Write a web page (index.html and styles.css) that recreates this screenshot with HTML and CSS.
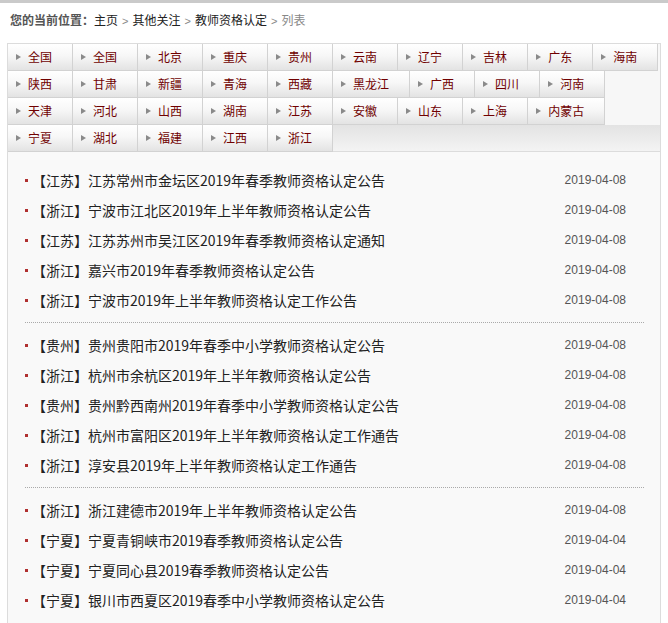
FILE: index.html
```html
<!DOCTYPE html>
<html lang="zh-CN">
<head>
<meta charset="utf-8">
<title>列表</title>
<link rel="stylesheet" href="styles.css">
</head>
<body>
<div class="topbar"></div>
<div class="crumb">
  <b class="crumb-label">您的当前位置：</b><a class="crumb-link">主页</a><span class="sep">&gt;</span><a class="crumb-link">其他关注</a><span class="sep">&gt;</span><a class="crumb-link">教师资格认定</a><span class="sep">&gt;</span><span class="crumb-cur">列表</span>
</div>

<div class="regions">
  <a class="tab">全国</a><a class="tab">全国</a><a class="tab">北京</a><a class="tab">重庆</a><a class="tab">贵州</a><a class="tab">云南</a><a class="tab">辽宁</a><a class="tab">吉林</a><a class="tab">广东</a><a class="tab">海南</a><a class="tab">陕西</a><a class="tab">甘肃</a><a class="tab">新疆</a><a class="tab">青海</a><a class="tab">西藏</a><a class="tab">黑龙江</a><a class="tab">广西</a><a class="tab">四川</a><a class="tab">河南</a><a class="tab">天津</a><a class="tab">河北</a><a class="tab">山西</a><a class="tab">湖南</a><a class="tab">江苏</a><a class="tab">安徽</a><a class="tab">山东</a><a class="tab">上海</a><a class="tab">内蒙古</a><a class="tab">宁夏</a><a class="tab">湖北</a><a class="tab">福建</a><a class="tab">江西</a><a class="tab">浙江</a>
</div>

<div class="list">
  <ul class="group">
    <li class="item"><a class="title">【江苏】江苏常州市金坛区2019年春季教师资格认定公告</a><span class="date">2019-04-08</span></li>
    <li class="item"><a class="title">【浙江】宁波市江北区2019年上半年教师资格认定公告</a><span class="date">2019-04-08</span></li>
    <li class="item"><a class="title">【江苏】江苏苏州市吴江区2019年春季教师资格认定通知</a><span class="date">2019-04-08</span></li>
    <li class="item"><a class="title">【浙江】嘉兴市2019年春季教师资格认定公告</a><span class="date">2019-04-08</span></li>
    <li class="item"><a class="title">【浙江】宁波市2019年上半年教师资格认定工作公告</a><span class="date">2019-04-08</span></li>
  </ul>
  <ul class="group">
    <li class="item"><a class="title">【贵州】贵州贵阳市2019年春季中小学教师资格认定公告</a><span class="date">2019-04-08</span></li>
    <li class="item"><a class="title">【浙江】杭州市余杭区2019年上半年教师资格认定公告</a><span class="date">2019-04-08</span></li>
    <li class="item"><a class="title">【贵州】贵州黔西南州2019年春季中小学教师资格认定公告</a><span class="date">2019-04-08</span></li>
    <li class="item"><a class="title">【浙江】杭州市富阳区2019年上半年教师资格认定工作通告</a><span class="date">2019-04-08</span></li>
    <li class="item"><a class="title">【浙江】淳安县2019年上半年教师资格认定工作通告</a><span class="date">2019-04-08</span></li>
  </ul>
  <ul class="group">
    <li class="item"><a class="title">【浙江】浙江建德市2019年上半年教师资格认定公告</a><span class="date">2019-04-08</span></li>
    <li class="item"><a class="title">【宁夏】宁夏青铜峡市2019春季教师资格认定公告</a><span class="date">2019-04-04</span></li>
    <li class="item"><a class="title">【宁夏】宁夏同心县2019春季教师资格认定公告</a><span class="date">2019-04-04</span></li>
    <li class="item"><a class="title">【宁夏】银川市西夏区2019春季中小学教师资格认定公告</a><span class="date">2019-04-04</span></li>
  </ul>
</div>
</body>
</html>
```
FILE: styles.css
```css
html, body {
  margin: 0;
  padding: 0;
  background: #ffffff;
}

body {
  font-family: "Noto Sans CJK SC", "Liberation Sans", sans-serif;
  color: #333;
  width: 668px;
}

a {
  text-decoration: none;
  cursor: pointer;
}

.topbar {
  height: 3px;
  background: #cacaca;
}

.crumb {
  height: 34px;
  line-height: 34px;
  padding-left: 10px;
  font-size: 12px;
  margin-bottom: 6px;
  color: #333;
}

.crumb-label {
  color: #555;
  font-weight: bold;
}

.crumb-link {
  color: #222;
}

.sep {
  color: #888;
  font-family: "Liberation Sans", sans-serif;
  font-size: 11px;
  padding: 0 4px;
}

.crumb-cur {
  color: #888;
}

.regions {
  margin-left: 7px;
  width: 652px;
  border: 1px solid #dcdcdc;
  border-bottom: 0;
  display: flex;
  flex-wrap: wrap;
  background: linear-gradient(#e3e3e3, #f4f4f4) left bottom / 100% 27px no-repeat, #f7f7f7;
}

.tab {
  position: relative;
  display: block;
  height: 26px;
  line-height: 26px;
  padding: 0 20px;
  font-size: 12px;
  color: #700000;
  border-right: 1px solid #d2d2d2;
  border-bottom: 1px solid #d2d2d2;
  background: linear-gradient(#ffffff 0%, #f7f7f7 45%, #e3e3e3 100%);
  white-space: nowrap;
}

.tab::before {
  content: "";
  position: absolute;
  left: 8px;
  top: 10px;
  border-left: 5px solid #8a8a8a;
  border-top: 3px solid transparent;
  border-bottom: 3px solid transparent;
}

.list {
  margin: -1px 0 0 7px;
  width: 652px;
  border: 1px solid #dcdcdc;
  background: #f9f9f9;
  padding-top: 13px;
  min-height: 480px;
}

.group {
  list-style: none;
  margin: 0 16px 7px 17px;
  padding: 0 0 7px 0;
  border-bottom: 1px dotted #aaa;
}

.group:last-child {
  border-bottom: 0;
}

.item {
  position: relative;
  display: flex;
  justify-content: space-between;
  align-items: center;
  height: 30px;
  padding: 0 18px 0 7px;
}

.item::before {
  content: "";
  position: absolute;
  left: 0;
  top: 14px;
  width: 3px;
  height: 3px;
  background: #b03030;
}

.title {
  font-size: 14px;
  color: #222;
  white-space: nowrap;
}

.date {
  font-family: "Liberation Sans", sans-serif;
  font-size: 12px;
  color: #555;
}
```
